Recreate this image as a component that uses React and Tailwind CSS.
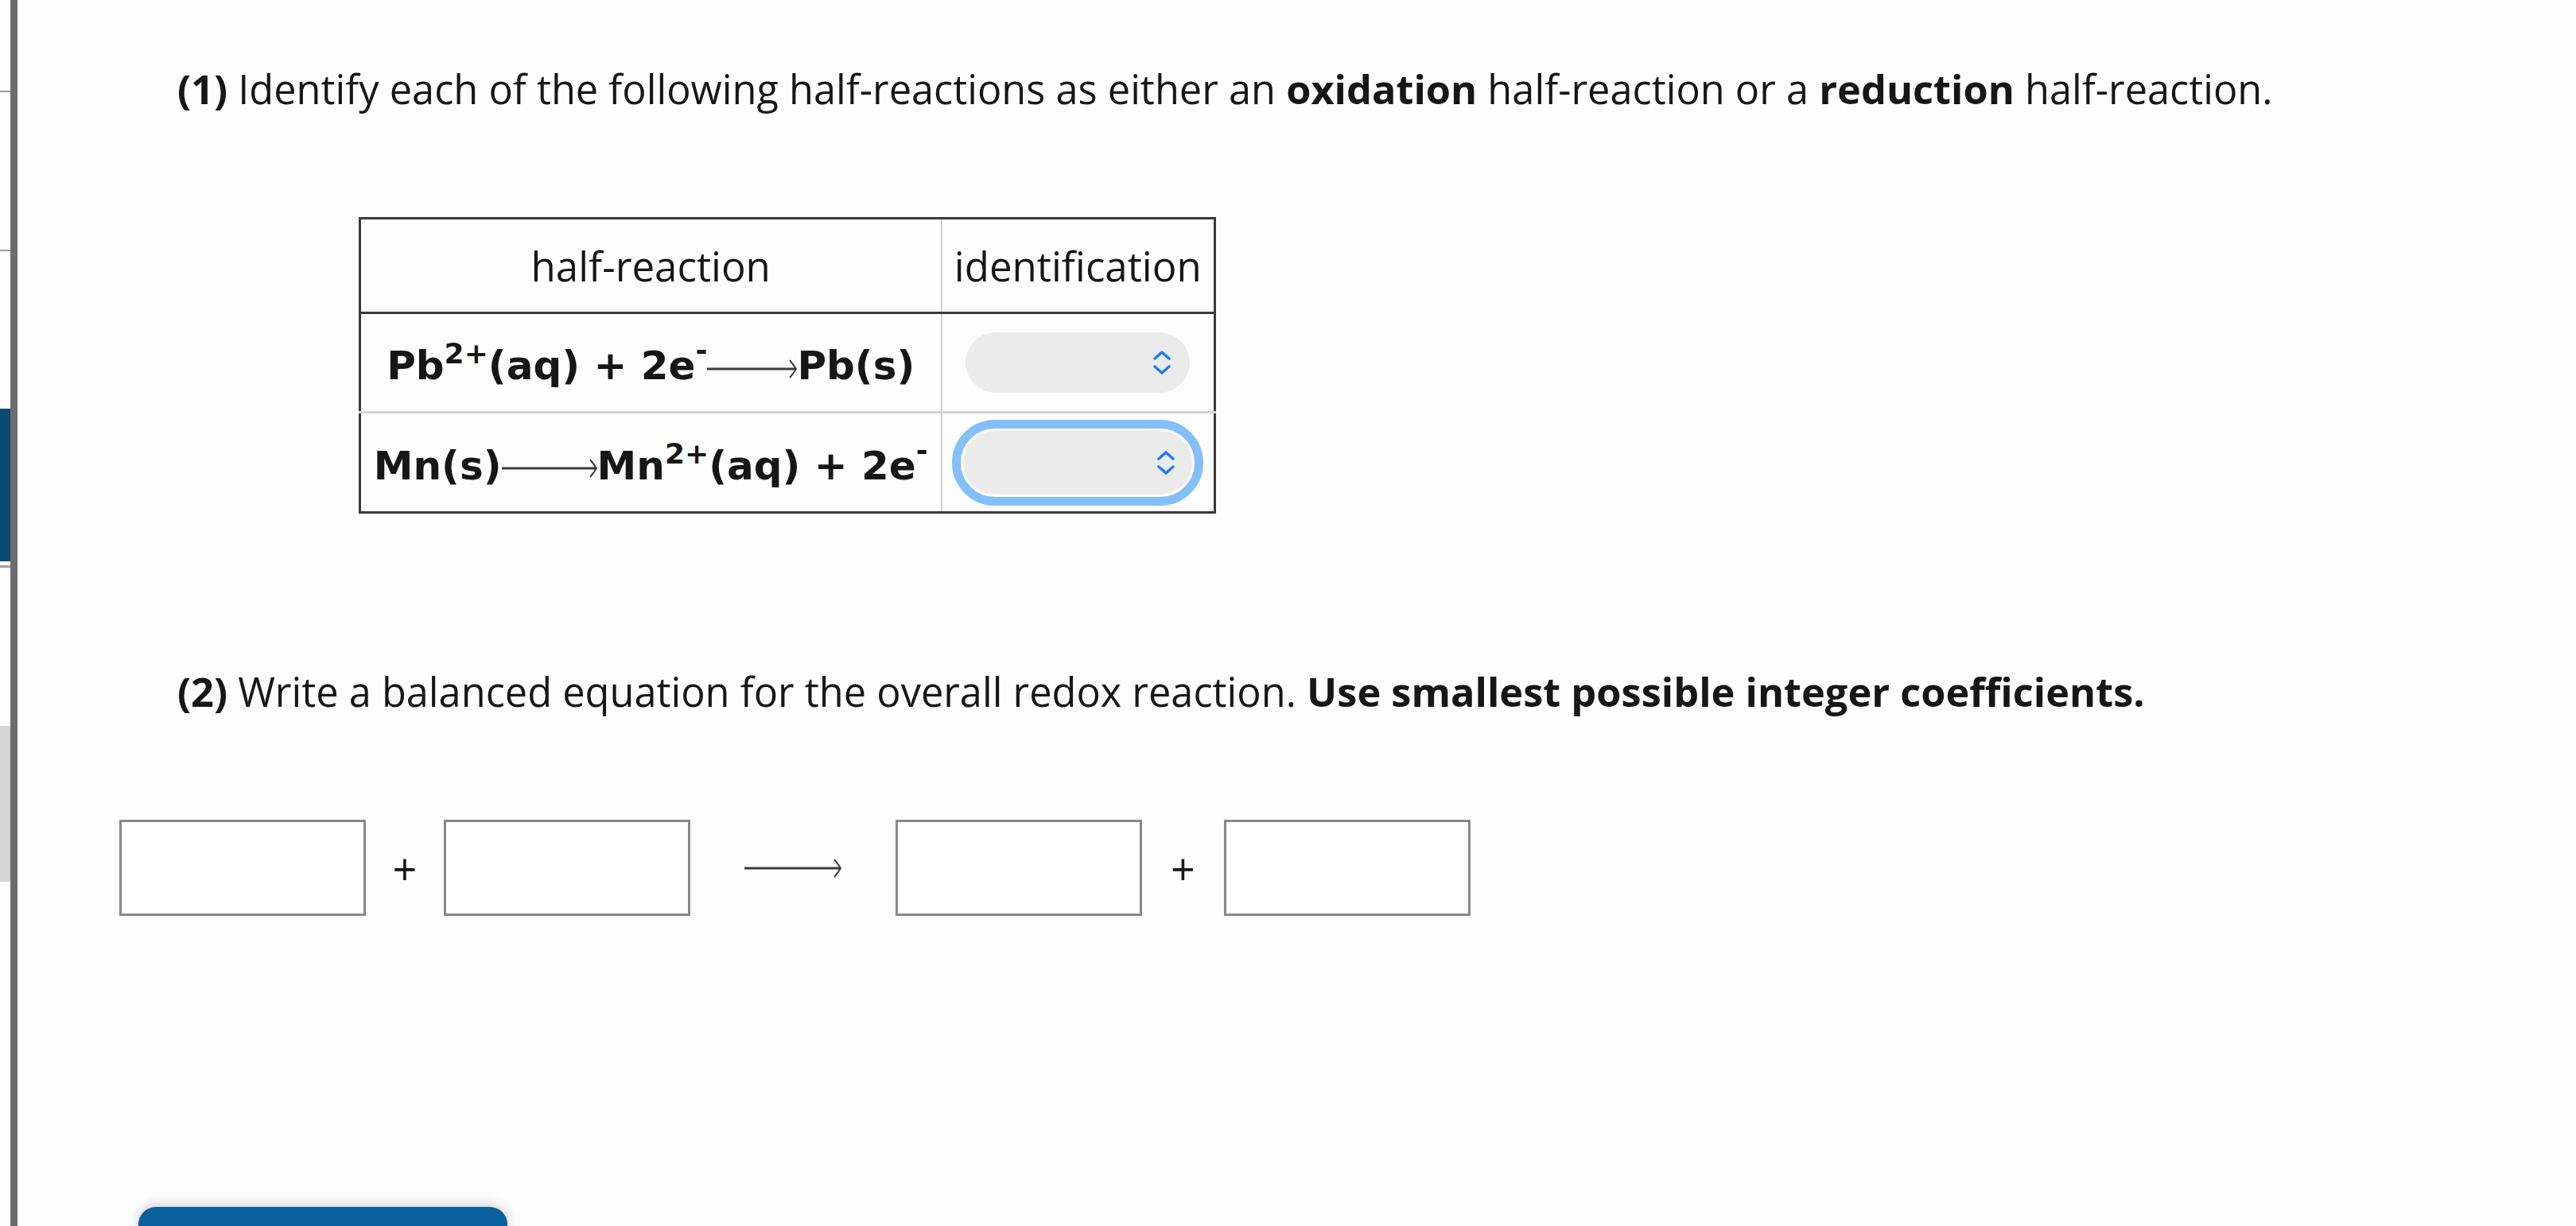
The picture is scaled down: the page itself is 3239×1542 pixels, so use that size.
import React from "react";

const Chevrons = () => (
  <svg width="26" height="36" viewBox="0 0 26 36" fill="none" stroke="#1f7cf2" strokeWidth="3.5" strokeLinecap="round" strokeLinejoin="round">
    <path d="M4 13 L13 5 L22 13" />
    <path d="M4 23 L13 31 L22 23" />
  </svg>
);

const LongArrow = ({ width = 113 }) => (
  <svg width={width} height="26" viewBox={`0 0 ${width} 26`} className="inline-block align-middle" fill="none" stroke="#3c3c3c">
    <path d={`M0 13 H${width - 2}`} strokeWidth="3" />
    <path d={`M${width - 9} 2 Q${width - 4} 8 ${width - 1} 13 Q${width - 4} 18 ${width - 9} 24`} strokeWidth="2" />
  </svg>
);

const Select = ({ focused }) =>
  focused ? (
    <div className="mx-auto w-[288px] h-[80px] rounded-full bg-[#ebebeb] flex items-center justify-end pr-[20px] outline-[11px] outline-solid outline-[#84bffa] outline-offset-[3px]">
      <Chevrons />
    </div>
  ) : (
    <div className="mx-auto w-[282px] h-[76px] rounded-full bg-[#ebebeb] flex items-center justify-end pr-[22px]">
      <Chevrons />
    </div>
  );

const Sup = ({ children, raise = "align-[20px]" }) => (
  <span className={`text-[36px] ${raise}`}>{children}</span>
);

const Box = () => <div className="w-[310px] h-[121px] border-[3px] border-[#888888] bg-white shrink-0" />;

const App = () => {
  return (
    <div
      className="flex h-screen overflow-hidden bg-[#fdfdfd] text-[#161616]"
      style={{ fontFamily: '"Open Sans", "Noto Sans", sans-serif' }}
    >
      {/* left edge of the side panel */}
      <aside className="w-[13px] shrink-0 flex flex-col">
        <div className="h-[114px]" />
        <div className="h-[2px] bg-[#9c9c9c]" />
        <div className="h-[198px]" />
        <div className="h-[2px] bg-[#9c9c9c]" />
        <div className="h-[198px]" />
        <div className="h-[192px] bg-[#0c4a73]" />
        <div className="h-[5px]" />
        <div className="h-[3px] bg-[#a0a0a0]" />
        <div className="h-[199px]" />
        <div className="h-[196px] bg-[#d5d5d5]" />
        <div className="flex-1" />
      </aside>
      <div className="w-[9px] shrink-0 bg-[#6c6c6c]" />

      {/* question */}
      <main className="flex-1 flex flex-col pt-[78px]">
        <p className="ml-[201px] text-[50.5px] leading-[68px] whitespace-nowrap">
          <b>(1)</b> Identify each of the following half-reactions as either an <b>oxidation</b> half-reaction or a{" "}
          <b>reduction</b> half-reaction.
        </p>

        <table className="ml-[429px] mt-[127px] w-[1078px] border-collapse border-[3px] border-[#3a3a3a]">
          <thead>
            <tr className="h-[119px] border-b-[3px] border-[#3a3a3a]">
              <th className="w-[731px] font-normal text-[51px] border-r-2 border-[#d0d0d0]">half-reaction</th>
              <th className="font-normal text-[51px]">identification</th>
            </tr>
          </thead>
          <tbody style={{ fontFamily: '"DejaVu Sans", Verdana, sans-serif' }}>
            <tr className="h-[125px] border-b-[3px] border-[#d4d4d4]">
              <td className="text-center font-bold text-[50px] border-r-2 border-[#d0d0d0] whitespace-nowrap">
                Pb<Sup>2+</Sup>(aq) + 2e<Sup raise="align-[24px]">-</Sup>
                <LongArrow />
                Pb(s)
              </td>
              <td>
                <Select />
              </td>
            </tr>
            <tr className="h-[126px]">
              <td className="text-center font-bold text-[50px] border-r-2 border-[#d0d0d0] whitespace-nowrap">
                Mn(s)
                <LongArrow width={120} />
                Mn<Sup>2+</Sup>(aq) + 2e<Sup raise="align-[24px]">-</Sup>
              </td>
              <td>
                <Select focused />
              </td>
            </tr>
          </tbody>
        </table>

        <p className="ml-[201px] mt-[190px] text-[50.5px] leading-[68px] whitespace-nowrap">
          <b>(2)</b> Write a balanced equation for the overall redox reaction.{" "}
          <b>Use smallest possible integer coefficients.</b>
        </p>

        <div className="ml-[128px] mt-[127px] flex items-center">
          <Box />
          <span className="w-[98px] text-center text-[54px] leading-none">+</span>
          <Box />
          <div className="w-[258px] flex justify-center">
            <LongArrow width={122} />
          </div>
          <Box />
          <span className="w-[103px] text-center text-[54px] leading-none">+</span>
          <Box />
        </div>

        <div className="ml-[152px] mt-[366px] w-[464px] h-[80px] shrink-0 rounded-t-[22px] bg-[#0a5f9d] shadow-[0_-3px_14px_rgba(0,0,0,0.18)]" />
      </main>
    </div>
  );
};

export default App;
